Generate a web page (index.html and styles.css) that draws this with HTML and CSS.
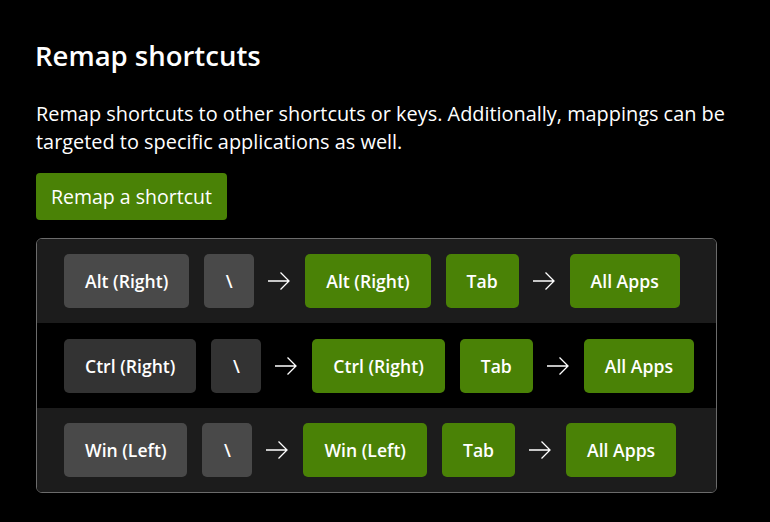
FILE: index.html
```html
<!DOCTYPE html>
<html>
<head>
<meta charset="utf-8">
<link rel="stylesheet" href="styles.css">
</head>
<body>
<main class="page">
  <h1 class="title">Remap shortcuts</h1>
  <p class="desc">Remap shortcuts to other shortcuts or keys. Additionally, mappings can be targeted to specific applications as well.</p>
  <button class="btn">Remap a shortcut</button>
  <div class="card">
    <div class="row">
      <span class="key">Alt (Right)</span>
      <span class="key">\</span>
      <svg class="arrow" width="22" height="22" viewBox="0 0 22 22"><path d="M0 11H21M12.5 2.5L21 11L12.5 19.5" fill="none" stroke="#fff" stroke-width="1.3"/></svg>
      <span class="key green">Alt (Right)</span>
      <span class="key green">Tab</span>
      <svg class="arrow" width="22" height="22" viewBox="0 0 22 22"><path d="M0 11H21M12.5 2.5L21 11L12.5 19.5" fill="none" stroke="#fff" stroke-width="1.3"/></svg>
      <span class="key green">All Apps</span>
    </div>
    <div class="row alt">
      <span class="key">Ctrl (Right)</span>
      <span class="key">\</span>
      <svg class="arrow" width="22" height="22" viewBox="0 0 22 22"><path d="M0 11H21M12.5 2.5L21 11L12.5 19.5" fill="none" stroke="#fff" stroke-width="1.3"/></svg>
      <span class="key green">Ctrl (Right)</span>
      <span class="key green">Tab</span>
      <svg class="arrow" width="22" height="22" viewBox="0 0 22 22"><path d="M0 11H21M12.5 2.5L21 11L12.5 19.5" fill="none" stroke="#fff" stroke-width="1.3"/></svg>
      <span class="key green">All Apps</span>
    </div>
    <div class="row">
      <span class="key">Win (Left)</span>
      <span class="key">\</span>
      <svg class="arrow" width="22" height="22" viewBox="0 0 22 22"><path d="M0 11H21M12.5 2.5L21 11L12.5 19.5" fill="none" stroke="#fff" stroke-width="1.3"/></svg>
      <span class="key green">Win (Left)</span>
      <span class="key green">Tab</span>
      <svg class="arrow" width="22" height="22" viewBox="0 0 22 22"><path d="M0 11H21M12.5 2.5L21 11L12.5 19.5" fill="none" stroke="#fff" stroke-width="1.3"/></svg>
      <span class="key green">All Apps</span>
    </div>
  </div>
</main>
</body>
</html>
```

FILE: styles.css
```css
html, body {
  margin: 0;
  padding: 0;
  background: #000;
}
body {
  font-family: "Open Sans", "Noto Sans", sans-serif;
  color: #fff;
  width: 770px;
  height: 522px;
  overflow: hidden;
}
.page {
  padding: 36px 0 0 36px;
  display: flex;
  flex-direction: column;
  align-items: flex-start;
}
.title {
  margin: 0;
  font-size: 27.5px;
  font-weight: 600;
  line-height: 40px;
  margin-left: -1px;
}
.desc {
  margin: 24px 0 0 0;
  width: 720px;
  font-size: 19.9px;
  line-height: 28px;
}
.btn {
  margin-top: 17px;
  height: 47px;
  padding: 0 15px;
  background: #4a8206;
  border: none;
  border-radius: 4px;
  color: #fff;
  font-family: inherit;
  font-size: 19.5px;
}
.card {
  margin-top: 18px;
  width: 679px;
  border: 1px solid #6b6b6b;
  border-radius: 6px;
  overflow: hidden;
}
.row {
  height: 84px;
  background: #1c1c1c;
  display: flex;
  align-items: center;
  padding-left: 27px;
}
.row.alt {
  height: 85px;
  background: #000;
}
.key {
  height: 54px;
  padding: 0 21px;
  min-width: 8px;
  display: flex;
  align-items: center;
  justify-content: center;
  border-radius: 5px;
  background: rgba(255, 255, 255, 0.2);
  font-size: 17.6px;
  font-weight: 600;
  margin-right: 15px;
}
.key.green {
  background: #4a8206;
}
.arrow {
  margin-left: -1px;
  margin-right: 15px;
}
```
